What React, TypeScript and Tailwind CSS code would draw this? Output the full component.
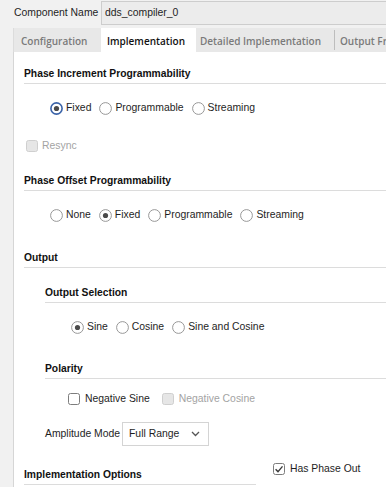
import React from "react";

const Radio = ({ checked, focus }: { checked?: boolean; focus?: boolean }) => (
  <svg width="13" height="13" viewBox="0 0 13 13" className="shrink-0">
    <circle
      cx="6.5"
      cy="6.5"
      r={focus ? 5.6 : 5.9}
      fill="#fff"
      stroke={focus ? "#3b63a8" : "#8c8c8c"}
      strokeWidth={focus ? 1.6 : 0.9}
    />
    {checked && <circle cx="6.5" cy="6.5" r="2.6" fill="#4a4a4a" />}
  </svg>
);

const Check = ({ checked, disabled }: { checked?: boolean; disabled?: boolean }) => (
  <svg width="12" height="12" viewBox="0 0 12 12" className="shrink-0">
    <rect
      x="0.5"
      y="0.5"
      width="11"
      height="11"
      rx="2"
      fill={disabled ? "#e6e6e6" : "#fff"}
      stroke={disabled ? "#cfcfcf" : "#7d7d7d"}
      strokeWidth="1"
    />
    {checked && (
      <path d="M2.6 6.2 L5 8.6 L9.5 3.4" fill="none" stroke="#3a3a3a" strokeWidth="1.4" />
    )}
  </svg>
);

const Heading = ({ children, className = "" }: { children: React.ReactNode; className?: string }) => (
  <div className={"border-b border-[#dcdcdc] pb-[2px] " + className}>
    <div className="h-[14px] leading-[14px] font-bold text-[10.3px] text-[#111]">{children}</div>
  </div>
);

const RadioItem = ({ label, checked, focus }: { label: string; checked?: boolean; focus?: boolean }) => (
  <div className="flex items-center gap-[3px] mr-[8px]">
    <Radio checked={checked} focus={focus} />
    <span>{label}</span>
  </div>
);

export default function App() {
  return (
    <div
      className="w-[386px] h-[487px] overflow-hidden bg-[#f1f1f1] text-[10.4px] text-[#1e1e1e]"
      style={{ fontFamily: '"Liberation Sans", Arial, sans-serif' }}
    >
      {/* Component Name row */}
      <div className="flex items-center h-[25px] pt-[1px]">
        <div className="pl-[14px] w-[101px] shrink-0">Component Name</div>
        <div className="flex-1 h-[24px] border border-[#cdcdcd] border-r-0 bg-[#ececec] flex items-center pl-[3px]">
          dds_compiler_0
        </div>
      </div>

      {/* Tabs */}
      <div
        className="ml-[13px] mt-[3px] h-[24px] flex overflow-hidden bg-[#e8e8e8] text-[10px] font-semibold whitespace-nowrap"
        style={{ fontFamily: '"Open Sans", "Liberation Sans", sans-serif' }}
      >
        <div className="w-[88px] shrink-0 pl-[7px] pt-[6px] text-[#7a7a7a] border-l border-[#dcdcdc]">Configuration</div>
        <div className="w-[95px] shrink-0 pl-[6px] pt-[6px] bg-white text-[#111]">Implementation</div>
        <div className="w-[138px] shrink-0 pl-[4px] pt-[6px] text-[#7a7a7a]">Detailed Implementation</div>
        <div className="w-[1px] shrink-0 h-[20px] mt-[2px] bg-[#bdbdbd]" />
        <div className="shrink-0 pl-[5px] pt-[6px] text-[#7a7a7a]">Output Frequencies</div>
      </div>

      {/* Content */}
      <div className="ml-[13px] h-[440px] bg-white border-l border-[#d6d6d6] pl-[10px] flex flex-col">
        <Heading className="mt-[15px]">Phase Increment Programmability</Heading>
        <div className="mt-[17px] ml-[26px] h-[14px] flex items-center">
          <RadioItem label="Fixed" checked focus />
          <RadioItem label="Programmable" />
          <RadioItem label="Streaming" />
        </div>
        <div className="mt-[24px] ml-[2px] h-[14px] flex items-center gap-[4px] text-[#a3a3a3]">
          <Check disabled />
          <span>Resync</span>
        </div>

        <Heading className="mt-[21px]">Phase Offset Programmability</Heading>
        <div className="mt-[17px] ml-[26px] h-[14px] flex items-center">
          <RadioItem label="None" />
          <RadioItem label="Fixed" checked />
          <RadioItem label="Programmable" />
          <RadioItem label="Streaming" />
        </div>

        <Heading className="mt-[29px]">Output</Heading>
        <div className="pl-[21px] flex flex-col">
          <Heading className="mt-[18px]">Output Selection</Heading>
          <div className="mt-[17px] ml-[26px] h-[14px] flex items-center">
            <RadioItem label="Sine" checked />
            <RadioItem label="Cosine" />
            <RadioItem label="Sine and Cosine" />
          </div>

          <Heading className="mt-[28px]">Polarity</Heading>
          <div className="mt-[13px] ml-[23px] h-[14px] flex items-center">
            <div className="flex items-center gap-[5px]">
              <Check />
              <span>Negative Sine</span>
            </div>
            <div className="flex items-center gap-[5px] ml-[12px] text-[#a3a3a3]">
              <Check disabled />
              <span>Negative Cosine</span>
            </div>
          </div>

          <div className="mt-[16px] flex items-center">
            <span className="w-[77px] shrink-0">Amplitude Mode</span>
            <div className="w-[87px] h-[24px] border border-[#d4d4d4] bg-white flex items-center pl-[6px] pr-[8px] justify-between">
              <span>Full Range</span>
              <svg width="9" height="6" viewBox="0 0 9 6">
                <path d="M1 1 L4.5 4.5 L8 1" fill="none" stroke="#555" strokeWidth="1.3" />
              </svg>
            </div>
          </div>
        </div>

        <div className="mt-[15px] flex items-start">
          <Heading className="mt-[7px] w-[232px]">Implementation Options</Heading>
          <div className="ml-[17px] mt-[1px] h-[14px] flex items-center gap-[5px]">
            <Check checked />
            <span>Has Phase Out</span>
          </div>
        </div>
      </div>
    </div>
  );
}
